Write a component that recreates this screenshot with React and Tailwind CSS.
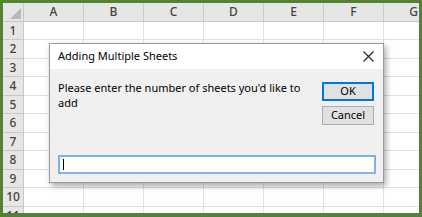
import React from "react";

const COLS = ["A", "B", "C", "D", "E", "F", "G"];
const ROWS = [
  { n: "1", h: "h-[18px]" },
  { n: "2", h: "h-[19px]" },
  { n: "3", h: "h-[18px]" },
  { n: "4", h: "h-[19px]" },
  { n: "5", h: "h-[18px]" },
  { n: "6", h: "h-[19px]" },
  { n: "7", h: "h-[18px]" },
  { n: "8", h: "h-[19px]" },
  { n: "9", h: "h-[18px]" },
  { n: "10", h: "h-[19px]" },
  { n: "11", h: "h-[19px]" },
];

export default function App() {
  return (
    <div
      className="w-[422px] h-[217px] bg-[#538135] pl-[3px] pt-[3px] pr-[3px] pb-[4px]"
      style={{ fontFamily: '"Noto Sans", "Liberation Sans", Arial, sans-serif' }}
    >
      <div className="relative w-full h-full bg-white overflow-hidden">
        {/* header row */}
        <div className="flex h-[19px]">
          <div className="w-[21px] shrink-0 bg-[#e6e6e6] border-r border-b border-[#c8c8c8] relative">
            <svg className="absolute right-[2px] bottom-[2px]" width="11" height="11" viewBox="0 0 11 11">
              <polygon points="11,0 11,11 0,11" fill="#b9b9b9" />
            </svg>
          </div>
          {COLS.map((c) => (
            <div
              key={c}
              className="w-[60px] shrink-0 bg-[#e6e6e6] border-r border-b border-[#c8c8c8] flex items-center justify-center text-[12px] font-medium text-[#444444]"
            >
              {c}
            </div>
          ))}
        </div>
        {ROWS.map((r) => (
          <div key={r.n} className={`flex ${r.h}`}>
            <div className="w-[21px] shrink-0 bg-[#e6e6e6] border-r border-b border-[#c8c8c8] flex items-start pt-[1px] justify-center text-[12px] font-medium leading-[16px] text-[#444444]">
              {r.n}
            </div>
            {COLS.map((c) => (
              <div key={c} className="w-[60px] shrink-0 border-r border-b border-[#e1e1e1]" />
            ))}
          </div>
        ))}

        {/* dialog */}
        <div className="absolute left-[46px] top-[40px] w-[335px] h-[140px] bg-[#f0f0f0] border border-[#9a9a9a] shadow-[2px_3px_6px_rgba(0,0,0,0.35)] flex flex-col text-[11px] text-black">
          <div className="h-[25px] bg-white flex items-center justify-between pl-[8px] pr-[9px]">
            <span className="whitespace-nowrap">Adding Multiple Sheets</span>
            <svg width="11" height="11" viewBox="0 0 11 11">
              <path d="M0.5 0.5 L10.5 10.5 M10.5 0.5 L0.5 10.5" stroke="#222" strokeWidth="1.1" />
            </svg>
          </div>
          <div className="flex pt-[11px] pl-[8px] pr-[9px]">
            <div className="flex-1 leading-[15px] whitespace-nowrap">
              Please enter the number of sheets you'd like to
              <br />
              add
            </div>
            <div className="flex flex-col gap-[5px] w-[52px] mt-[2px]">
              <div className="h-[19px] bg-[#e1e1e1] border-2 border-[#0078d7] flex items-center justify-center">
                OK
              </div>
              <div className="h-[19px] bg-[#e1e1e1] border border-[#adadad] flex items-center justify-center">
                Cancel
              </div>
            </div>
          </div>
          <div className="mt-[30px] ml-[8px] w-[318px] h-[19px] bg-white border-2 border-[#7ab4ea] flex items-center pl-[3px]">
            <div className="w-px h-[11px] bg-black" />
          </div>
        </div>
      </div>
    </div>
  );
}
